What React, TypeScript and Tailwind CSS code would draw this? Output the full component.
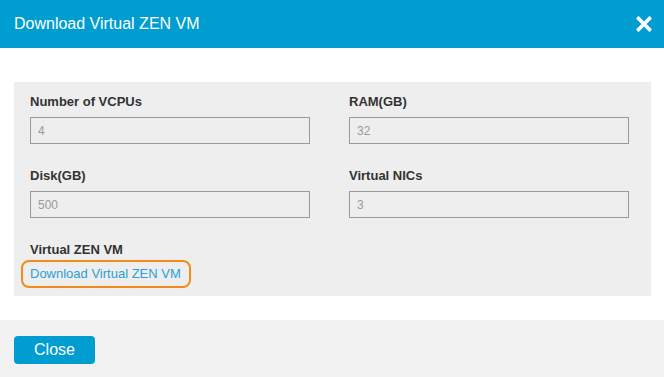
import React from 'react'

const font = { fontFamily: '"Liberation Sans", Arial, sans-serif' }

interface FieldProps {
  label: string
  value: string
}

const Field: React.FC<FieldProps> = ({ label, value }) => (
  <div className="flex flex-col">
    <label className="text-[13px] font-bold leading-[16px] text-[#333]">{label}</label>
    <input
      readOnly
      value={value}
      className="mt-[7px] h-[27px] w-[280px] border border-[#9a9a9a] bg-[#eeeeee] px-[7px] text-[12px] text-[#9a9a9a] outline-none"
    />
  </div>
)

export default function App() {
  return (
    <div className="flex h-[377px] w-[664px] flex-col bg-white" style={font}>
      <div className="flex h-[48px] items-center justify-between bg-[#009dd0] pl-[14px] pr-[12px]">
        <h2 className="text-[16px] text-white">Download Virtual ZEN VM</h2>
        <button type="button" className="text-white">
          <svg width="16" height="16" viewBox="0 0 16 16">
            <path d="M2.5 2.5 L13.5 13.5 M13.5 2.5 L2.5 13.5" stroke="white" strokeWidth="3.6" strokeLinecap="square" />
          </svg>
        </button>
      </div>

      <div className="px-[14px] pt-[34px]">
        <div className="h-[214px] w-[637px] bg-[#eeeeee] pl-[16px] pt-[12px]">
          <div className="grid grid-cols-[280px_280px] gap-x-[39px] gap-y-[24px]">
            <Field label="Number of VCPUs" value="4" />
            <Field label="RAM(GB)" value="32" />
            <Field label="Disk(GB)" value="500" />
            <Field label="Virtual NICs" value="3" />
          </div>
          <div className="mt-[24px] text-[13px] font-bold leading-[16px] text-[#333]">Virtual ZEN VM</div>
          <a
            href="#"
            className="-ml-[9px] mt-[2px] inline-flex h-[28px] items-center rounded-[8px] border-2 border-[#f28c1e] pl-[7px] pr-[8px] text-[13px] text-[#2a9fd8]"
          >
            Download Virtual ZEN VM
          </a>
        </div>
      </div>

      <div className="mt-auto flex h-[57px] items-start bg-[#f2f2f2] px-[14px] pt-[16px]">
        <button
          type="button"
          className="h-[28px] w-[81px] rounded-[4px] bg-[#009dd0] text-[16px] text-white"
        >
          Close
        </button>
      </div>
    </div>
  )
}
